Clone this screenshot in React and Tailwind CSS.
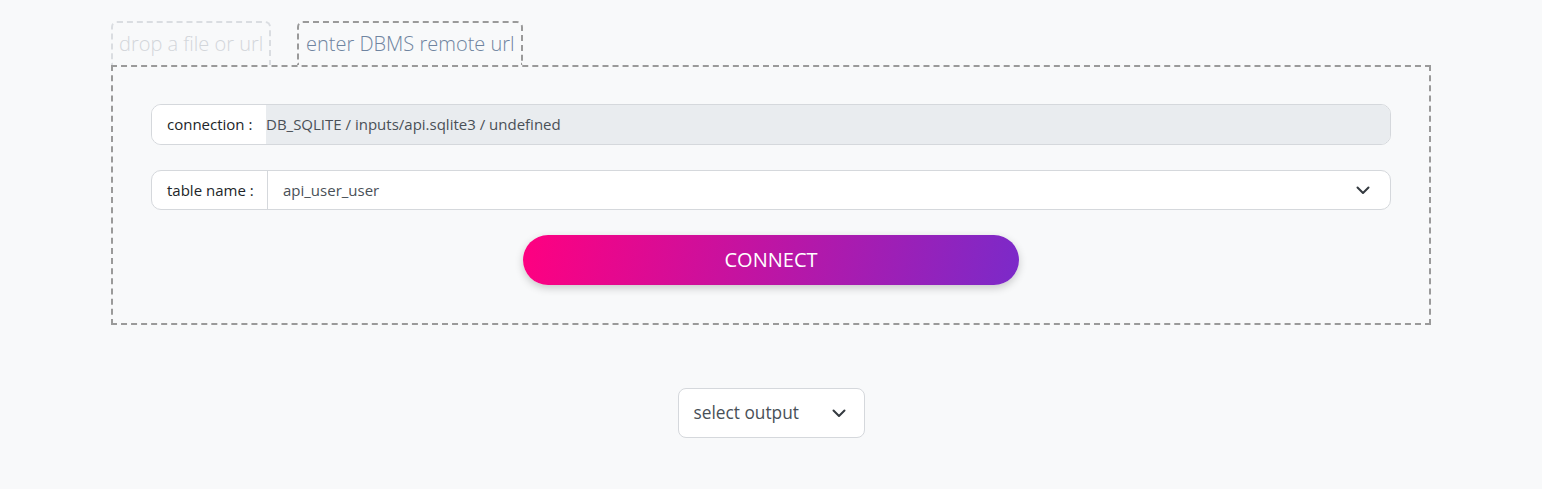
import React from "react";

function Chevron({ className }) {
  return (
    <svg className={className} viewBox="0 0 16 16" fill="none" stroke="#343a40" strokeWidth="2" strokeLinecap="round" strokeLinejoin="round">
      <path d="M2.5 5.5 8 11l5.5-5.5" />
    </svg>
  );
}

export default function App() {
  return (
    <div className="min-h-screen bg-[#f8f9fa] font-['Open_Sans',sans-serif] pt-[21px]">
      <div className="ml-[111px] w-[1320px]">
        <div className="flex items-end gap-[26px] h-[44px]">
          <div className="w-[160px] h-[44px] border-2 border-b-0 border-dashed border-[#dadde1] rounded-t-[6px] pl-[6px] flex items-center text-[20px] font-light text-[#d3d6da] whitespace-nowrap">
            drop a file or url
          </div>
          <div className="w-[226px] h-[44px] border-2 border-b-0 border-dashed border-[#9a9a9a] rounded-t-[6px] pl-[7px] flex items-center text-[20px] font-light text-[#6f84a0] whitespace-nowrap">
            enter DBMS remote url
          </div>
        </div>
        <div className="h-[260px] border-2 border-dashed border-[#9a9a9a] px-[38px] pt-[37px]">
          <div className="flex h-[41px] rounded-[10px] border border-[#d5d8dc] overflow-hidden">
            <div className="w-[114px] bg-white flex items-center pl-[15px] text-[15px] text-[#212529]">connection :</div>
            <div className="flex-1 bg-[#e9ecef] flex items-center text-[15px] text-[#495057]">DB_SQLITE / inputs/api.sqlite3 / undefined</div>
          </div>
          <div className="mt-[25px] flex h-[40px] rounded-[10px] border border-[#d5d8dc] overflow-hidden bg-white">
            <div className="w-[116px] flex items-center pl-[15px] text-[15px] text-[#212529] border-r border-[#d5d8dc]">table name :</div>
            <div className="flex-1 flex items-center pl-[15px] pr-[19px] text-[15px] text-[#495057]">
              <span className="flex-1">api_user_user</span>
              <Chevron className="w-[16px] h-[16px]" />
            </div>
          </div>
          <div className="flex justify-center mt-[25px]">
            <button className="w-[496px] h-[50px] rounded-full bg-[linear-gradient(100deg,#ff0080,#7b2ac9)] text-white text-[20px] shadow-[0_3px_8px_rgba(0,0,0,0.2)] flex items-center justify-center">
              CONNECT
            </button>
          </div>
        </div>
      </div>
      <div className="flex justify-center mt-[63px]">
        <div className="w-[187px] h-[50px] bg-white border border-[#d5d8dc] rounded-[8px] flex items-center pl-[15px] pr-[17px] text-[17.3px] text-[#495057]">
          <span className="flex-1">select output</span>
          <Chevron className="w-[16px] h-[16px]" />
        </div>
      </div>
    </div>
  );
}
